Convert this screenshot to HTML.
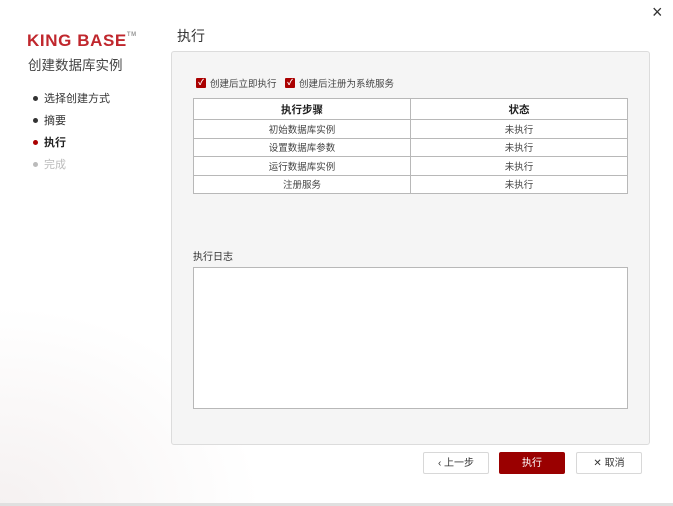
<!DOCTYPE html>
<html><head><meta charset="utf-8"><style>
*{margin:0;padding:0;box-sizing:border-box}
body{width:673px;height:506px;overflow:hidden;background:#fff;font-family:"Liberation Sans","Noto Sans CJK SC",sans-serif;position:relative;color:#333}
.abs{position:absolute}
.logo{left:27px;top:31px;font-size:17px;font-weight:bold;color:#c0272d;letter-spacing:0.6px;font-family:"Liberation Sans",sans-serif}
.logo sup{font-size:6px;color:#999;vertical-align:top;position:relative;top:1px}
.sub{left:28px;top:54px;font-size:13.5px;color:#444}
.step{left:33px;font-size:11px;color:#333}
.step i{display:inline-block;width:5px;height:5px;border-radius:50%;background:#333;margin-right:6px;vertical-align:middle;position:relative;top:-1px}
.title{left:177px;top:26px;font-size:14px;color:#333}
.panel{left:171px;top:51px;width:479px;height:394px;background:#f5f5f5;border:1px solid #dcdcdc;border-radius:3px}
.cb{top:76px;font-size:9.5px;color:#444}
.cb b{display:inline-block;width:10px;height:10px;background:#a00;border-radius:1px;vertical-align:middle;margin-right:4px;position:relative;top:-1px;color:#fff;font-size:8px;line-height:10px;text-align:center}
table{position:absolute;left:193px;top:98px;width:435px;border-collapse:collapse;background:#fff;font-size:9.5px}
td{border:1px solid #b8b8b8;text-align:center;height:18.5px;color:#444}
tr:first-child td{height:21px;font-weight:bold;font-size:10.5px;color:#222}
.log{left:193px;top:267px;width:435px;height:142px;background:#fff;border:1px solid #b8b8b8}
.btn{top:452px;width:66px;height:22px;border:1px solid #d8d8d8;background:#fff;font-size:10px;text-align:center;line-height:21px;color:#333;border-radius:2px}
</style></head><body>
<div class="abs" style="left:0;top:250px;width:673px;height:256px;background:radial-gradient(ellipse 260px 200px at 0% 100%,#f5f1f1 0%,#fff 100%)"></div>
<div class="abs" style="left:0;top:503px;width:673px;height:3px;background:#e0e0e0"></div>
<div class="abs logo">KING BASE<sup>TM</sup></div>
<div class="abs sub">创建数据库实例</div>
<div class="abs step" style="top:90px"><i></i>选择创建方式</div>
<div class="abs step" style="top:112px"><i></i>摘要</div>
<div class="abs step" style="top:134px;font-weight:bold;color:#222"><i style="background:#a00"></i>执行</div>
<div class="abs step" style="top:156px;color:#bbb"><i style="background:#bbb"></i>完成</div>
<div class="abs" style="left:652px;top:2px;font-size:18px;color:#333">×</div>
<div class="abs title">执行</div>
<div class="abs panel"></div>
<div class="abs cb" style="left:196px"><b>✓</b>创建后立即执行</div>
<div class="abs cb" style="left:285px"><b>✓</b>创建后注册为系统服务</div>
<table>
<tr><td style="width:217px">执行步骤</td><td>状态</td></tr>
<tr><td>初始数据库实例</td><td>未执行</td></tr>
<tr><td>设置数据库参数</td><td>未执行</td></tr>
<tr><td>运行数据库实例</td><td>未执行</td></tr>
<tr><td>注册服务</td><td>未执行</td></tr>
</table>
<div class="abs" style="left:193px;top:248px;font-size:10px;color:#333">执行日志</div>
<div class="abs log"></div>
<div class="abs btn" style="left:423px">‹ 上一步</div>
<div class="abs btn" style="left:499px;background:#9a0000;border-color:#9a0000;color:#fff">执行</div>
<div class="abs btn" style="left:576px">✕ 取消</div>
</body></html>
